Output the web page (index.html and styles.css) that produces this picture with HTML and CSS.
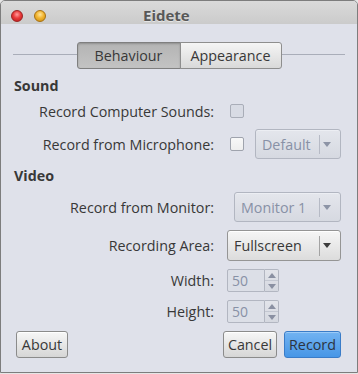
FILE: index.html
```html
<!DOCTYPE html>
<html lang="en">
<head>
  <meta charset="UTF-8">
  <title>Eidete</title>
  <link rel="stylesheet" href="styles.css">
</head>
<body>

<div class="window">
  <div class="titlebar">
    <span class="light close"></span>
    <span class="light minimize"></span>
    <div class="title">Eidete</div>
  </div>

  <div class="content">
    <div class="tabs-row">
      <div class="tab-line"></div>
      <div class="tabs">
        <button class="tab tab-first active">Behaviour</button>
        <button class="tab tab-last">Appearance</button>
      </div>
      <div class="tab-line"></div>
    </div>

    <div class="section">Sound</div>
    <div class="grid sound-grid">
      <label>Record Computer Sounds:</label>
      <div class="field"><span class="check disabled"></span></div>

      <label>Record from Microphone:</label>
      <div class="field">
        <span class="check"></span>
        <div class="combo disabled mic">
          <span class="combo-text">Default</span>
          <span class="combo-sep"></span>
          <span class="combo-arrow"></span>
        </div>
      </div>
    </div>

    <div class="section video">Video</div>
    <div class="grid video-grid">
      <label>Record from Monitor:</label>
      <div class="field">
        <div class="combo disabled monitor">
          <span class="combo-text">Monitor 1</span>
          <span class="combo-sep"></span>
          <span class="combo-arrow"></span>
        </div>
      </div>

      <label>Recording Area:</label>
      <div class="field">
        <div class="combo">
          <span class="combo-text">Fullscreen</span>
          <span class="combo-sep"></span>
          <span class="combo-arrow"></span>
        </div>
      </div>

      <label>Width:</label>
      <div class="field">
        <div class="spin">
          <span class="spin-entry">50</span>
          <span class="spin-btns">
            <span class="half"><span class="up"></span></span>
            <span class="half lower"><span class="down"></span></span>
          </span>
        </div>
      </div>

      <label>Height:</label>
      <div class="field">
        <div class="spin">
          <span class="spin-entry">50</span>
          <span class="spin-btns">
            <span class="half"><span class="up"></span></span>
            <span class="half lower"><span class="down"></span></span>
          </span>
        </div>
      </div>
    </div>

    <div class="footer">
      <button class="btn about">About</button>
      <div class="spacer"></div>
      <button class="btn cancel">Cancel</button>
      <button class="btn primary">Record</button>
    </div>
  </div>
</div>

</body>
</html>
```

FILE: styles.css
```css
body {
  margin: 0;
  background: #e6e6e6;
  font-family: "Open Sans", "Noto Sans", sans-serif;
  font-size: 14.3px;
  color: #383838;
}
.window {
  width: 356px;
  height: 371px;
  border: 1px solid #7d7d7d;
  border-radius: 5px 5px 0 0;
  background: #dfe1ea;
  display: flex;
  flex-direction: column;
  overflow: hidden;
}
.titlebar {
  height: 17px;
  padding-top: 6px;
  display: flex;
  align-items: center;
  background: linear-gradient(#dadada, #cbcbcb);
}
.light {
  width: 12px;
  height: 12px;
  box-sizing: border-box;
  border-radius: 50%;
}
.close {
  margin-left: 10px;
  border: 1px solid #9b2323;
  background: radial-gradient(circle at 50% 35%, #ff9c9c 0, #ea3b3b 45%, #b81818 100%);
}
.minimize {
  margin-left: 11px;
  border: 1px solid #a76f10;
  background: radial-gradient(circle at 50% 35%, #ffe59a 0, #f2b531 45%, #c98a0c 100%);
}
.title {
  margin-left: 97px;
  font-size: 15px;
  font-weight: bold;
  color: #585858;
  line-height: 17px;
  text-shadow: 0 1px 0 rgba(255,255,255,0.5);
}
.content {
  flex: 1;
  display: flex;
  flex-direction: column;
  padding: 18px 16px 0 13px;
}
.tabs-row {
  display: flex;
  align-items: flex-start;
  margin: 0 -4px 0 -1px;
}
.tab-line {
  flex: 1;
  height: 1px;
  margin-top: 12px;
  background: #a9adb9;
}
.tabs {
  display: flex;
}
.tab {
  height: 27px;
  margin: 0;
  padding: 0;
  font: inherit;
  color: #383838;
  border: 1px solid #8e8e8e;
  background: linear-gradient(#f5f5f5, #d9d9d9);
  cursor: pointer;
}
.tab-first {
  width: 104px;
  border-radius: 3px 0 0 3px;
}
.tab-last {
  width: 102px;
  margin-left: -1px;
  border-radius: 0 3px 3px 0;
}
.tab.active {
  background: linear-gradient(#b4b4b4, #c3c3c3);
  box-shadow: inset 0 1px 2px rgba(0,0,0,0.2);
  border-color: #7f7f7f;
}
.section {
  margin-top: 8px;
  line-height: 17px;
  font-weight: bold;
}
.grid {
  display: grid;
  grid-template-columns: 200px 1fr;
  column-gap: 13px;
  align-items: center;
}
.grid label {
  text-align: right;
  white-space: nowrap;
}
.sound-grid {
  margin-top: 5px;
  grid-template-rows: 24px 30px;
  row-gap: 6px;
}
.video-grid {
  margin-top: 8px;
  grid-template-rows: 30px 31px 23px 23px;
  row-gap: 8px;
}
.field {
  display: flex;
  align-items: center;
  height: 100%;
}
.check {
  width: 14px;
  height: 14px;
  box-sizing: border-box;
  margin-left: 3px;
  border: 1px solid #9fa3ad;
  border-radius: 2px;
  background: linear-gradient(#f8f8f8, #eeeeee);
}
.check.disabled {
  background: #d8dbe4;
  border-color: #a9adb8;
}
.combo {
  flex: 1;
  align-self: stretch;
  display: flex;
  align-items: center;
  border: 1px solid #959595;
  border-radius: 3px;
  background: linear-gradient(#f6f6f6, #dcdcdc);
  box-shadow: inset 0 1px 0 #fff;
}
.combo.mic {
  margin-left: 11px;
}
.combo.monitor {
  margin-left: 7px;
}
.combo.disabled {
  border-color: #b2b6c1;
  background: linear-gradient(#e4e6ec, #d6d9e1);
  box-shadow: inset 0 1px 0 #eceef3;
  color: #8891a6;
}
.combo-text {
  flex: 1;
  padding-left: 6px;
}
.combo-sep {
  width: 1px;
  align-self: stretch;
  margin: 5px 0 4px;
  background: #a3a3a3;
}
.combo.disabled .combo-sep {
  background: #b6bac5;
}
.combo-arrow {
  width: 0;
  height: 0;
  margin: 0 9px 0 3px;
  border-left: 4.5px solid transparent;
  border-right: 4.5px solid transparent;
  border-top: 5px solid #3c3c3c;
}
.combo.disabled .combo-arrow {
  border-top-color: #8d94a6;
}
.spin {
  display: flex;
  width: 52px;
  height: 23px;
}
.spin-entry {
  flex: 1;
  box-sizing: border-box;
  padding-left: 4px;
  font-size: 14px;
  line-height: 21px;
  color: #8891a6;
  border: 1px solid #b2b6c1;
  border-radius: 2px 0 0 2px;
  background: #dcdfe7;
}
.spin-btns {
  width: 13px;
  display: flex;
  flex-direction: column;
  border: 1px solid #b2b6c1;
  border-left: none;
  border-radius: 0 2px 2px 0;
  background: linear-gradient(#e2e4ea, #d5d8e0);
}
.half {
  flex: 1;
  display: flex;
  align-items: center;
  justify-content: center;
}
.half.lower {
  border-top: 1px solid #c3c7d1;
}
.spin-btns .up,
.spin-btns .down {
  width: 0;
  height: 0;
  border-left: 4px solid transparent;
  border-right: 4px solid transparent;
}
.spin-btns .up {
  border-bottom: 5px solid #8a90a2;
}
.spin-btns .down {
  border-top: 5px solid #8a90a2;
}
.footer {
  display: flex;
  margin-top: 8px;
  padding-left: 2px;
}
.spacer {
  flex: 1;
}
.btn {
  height: 27px;
  padding: 0;
  margin: 0;
  font: inherit;
  color: #383838;
  border: 1px solid #8b8b8b;
  border-radius: 3px;
  background: linear-gradient(#f7f7f7, #d6d6d6);
  box-shadow: inset 0 1px 0 #fff;
  cursor: pointer;
}
.about {
  width: 52px;
}
.cancel {
  width: 54px;
}
.primary {
  width: 57px;
  margin-left: 7px;
  color: #2c3340;
  border-color: #3a7cc8;
  background: linear-gradient(#72b3f2, #4796e6);
  box-shadow: inset 0 1px 0 #9ccbf7;
}
```
